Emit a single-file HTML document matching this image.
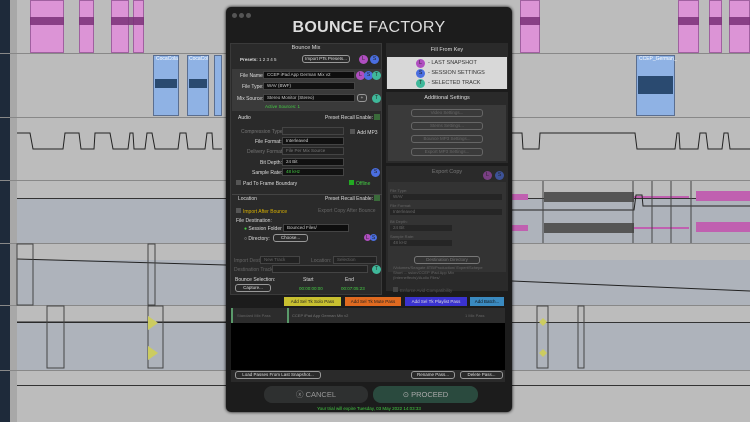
<!DOCTYPE html>
<html><head><meta charset="utf-8"><style>
*{margin:0;padding:0;box-sizing:border-box}
body{width:750px;height:422px;overflow:hidden;background:#bcbcbc;font-family:"Liberation Sans",sans-serif;position:relative}
.a{position:absolute}
.t{font-size:5px;color:#ddd;white-space:nowrap}
.dd{position:absolute;background:#111;border:1px solid #444;height:8px;font-size:4.5px;color:#ccc;padding-left:3px;line-height:6px}
.btn{position:absolute;border:1px solid #999;border-radius:3px;height:8px;font-size:4.5px;color:#ddd;text-align:center;line-height:6px}
.c{position:absolute;width:9px;height:9px;border-radius:50%;font-size:5px;color:#222;text-align:center;line-height:9px}
.L{background:#b04ec0}.S{background:#4a6ee0}.T{background:#3fb89a}
.pink{position:absolute;background:#dc94d6;border:1px solid #a060a0}
.blue{position:absolute;background:#8fb2e4;border:1px solid #5a6e90}
</style></head><body>
<div class="a" style="left:0;top:0;width:10px;height:422px;background:#1e2a3a"></div>
<div class="a" style="left:10px;top:0;width:7px;height:422px;background:#a8a8a8"></div>
<div class="a" style="left:17px;top:198px;width:733px;height:45px;background:#aeb3bb"></div>
<div class="a" style="left:17px;top:260px;width:733px;height:45px;background:#aeb3bb"></div>
<div class="a" style="left:17px;top:322px;width:733px;height:48px;background:#aeb3bb"></div>
<div class="a" style="left:0;top:53px;width:750px;height:1px;background:#888"></div>
<div class="a" style="left:0;top:117px;width:750px;height:1px;background:#888"></div>
<div class="a" style="left:0;top:180px;width:750px;height:1px;background:#888"></div>
<div class="a" style="left:0;top:243px;width:750px;height:1px;background:#888"></div>
<div class="a" style="left:0;top:305px;width:750px;height:1px;background:#888"></div>
<div class="a" style="left:0;top:370px;width:750px;height:1px;background:#888"></div>
<div class="a" style="left:17px;top:198px;width:733px;height:1px;background:#333"></div>
<div class="a" style="left:17px;top:322px;width:733px;height:1px;background:#333"></div>
<div class="a" style="left:17px;top:385px;width:733px;height:1px;background:#333"></div>
<div class="pink" style="left:30px;top:0;width:34px;height:53px"></div>
<div class="pink" style="left:79px;top:0;width:15px;height:53px"></div>
<div class="pink" style="left:111px;top:0;width:18px;height:53px"></div>
<div class="pink" style="left:133px;top:0;width:11px;height:53px"></div>
<div class="pink" style="left:520px;top:0;width:20px;height:53px"></div>
<div class="pink" style="left:678px;top:0;width:21px;height:53px"></div>
<div class="pink" style="left:709px;top:0;width:13px;height:53px"></div>
<div class="pink" style="left:729px;top:0;width:21px;height:53px"></div>
<div class="a" style="left:30px;top:17px;width:720px;height:8px;opacity:.85;background:linear-gradient(90deg,#7a3078 0 34px,transparent 34px 49px,#7a3078 49px 64px,transparent 64px 81px,#7a3078 81px 114px,transparent 114px 490px,#7a3078 490px 510px,transparent 510px 648px,#7a3078 648px 669px,transparent 669px 679px,#7a3078 679px 692px,transparent 692px 699px,#7a3078 699px)"></div>
<div class="blue" style="left:153px;top:55px;width:26px;height:61px"></div>
<div class="blue" style="left:187px;top:55px;width:22px;height:61px"></div>
<div class="blue" style="left:214px;top:55px;width:8px;height:61px"></div>
<div class="blue" style="left:636px;top:55px;width:39px;height:61px"></div>
<div class="a" style="left:155px;top:79px;width:22px;height:9px;background:#2a4a70"></div>
<div class="a" style="left:189px;top:79px;width:18px;height:9px;background:#2a4a70"></div>
<div class="a" style="left:638px;top:76px;width:35px;height:18px;background:#2a4a70"></div>
<div class="a" style="left:156px;top:56px;font-size:5px;color:#fff">CocaCola</div>
<div class="a" style="left:189px;top:56px;font-size:5px;color:#fff">CocaCol</div>
<div class="a" style="left:639px;top:56px;font-size:5px;color:#fff">CCEP_German_</div>
<svg class="a" style="left:0;top:0" width="750" height="422">
<polyline fill="none" stroke="#222" stroke-width="1" points="17,133 30,133 33,149 63,149 65,133 79,133 81,149 94,149 95,133 110,133 113,149 128,149 130,133 133,133 134,149 145,149 147,133 152,133 155,149 178,149 180,133 186,133 188,149 205,149 207,133 212,133 213,149 222,149"/>
<polyline fill="none" stroke="#222" stroke-width="1" points="512,133 522,133 523,149 539,149 540,133 635,133 637,149 675,149 677,133 679,133 680,149 698,149 700,133 706,133 708,149 722,149 724,133 728,133 730,149 750,149"/>
<line x1="17" y1="259" x2="226" y2="265" stroke="#222"/><line x1="512" y1="281" x2="750" y2="291" stroke="#222"/>
<line x1="17" y1="322" x2="226" y2="322" stroke="#222"/>
<rect x="17" y="244" width="16" height="61" fill="none" stroke="#444"/>
<rect x="148" y="244" width="7" height="61" fill="none" stroke="#444"/>
<rect x="47" y="306" width="17" height="62" fill="none" stroke="#444"/>
<rect x="148" y="306" width="15" height="62" fill="none" stroke="#444"/>
<rect x="537" y="306" width="11" height="62" fill="none" stroke="#444"/>
<rect x="578" y="306" width="6" height="62" fill="none" stroke="#444"/>
<polygon points="148,316 148,330 158,323" fill="#cccc60"/><polygon points="148,346 148,360 158,353" fill="#cccc60"/>
<polygon points="543,318 547,322 543,326 539,322" fill="#cccc60"/><polygon points="543,349 547,353 543,357 539,353" fill="#cccc60"/>
<rect x="544" y="192" width="90" height="10" fill="#555"/><rect x="544" y="223" width="90" height="10" fill="#555"/>
<rect x="512" y="194" width="16" height="6" fill="#c060b0"/><rect x="512" y="225" width="16" height="6" fill="#c060b0"/>
<rect x="634" y="196" width="55" height="2" fill="#c060b0"/><rect x="634" y="227" width="55" height="2" fill="#c060b0"/>
<rect x="696" y="191" width="54" height="10" fill="#c060b0"/><rect x="696" y="222" width="54" height="10" fill="#c060b0"/>
<polyline fill="none" stroke="#222" points="512,210 634,210 636,195 642,195 643,206 750,206"/>
<line x1="543" y1="181" x2="543" y2="243" stroke="#444"/><line x1="633" y1="181" x2="633" y2="243" stroke="#444"/><line x1="652" y1="181" x2="652" y2="243" stroke="#444"/><line x1="671" y1="181" x2="671" y2="243" stroke="#444"/><line x1="691" y1="181" x2="691" y2="243" stroke="#444"/>
</svg>
<div class="a" style="left:226px;top:7px;width:286px;height:405px;background:#1c1c1c;border-radius:5px;box-shadow:0 0 3px #000"></div>
<div class="a" style="left:232px;top:13px;width:5px;height:5px;border-radius:50%;background:#555;box-shadow:7px 0 #555,14px 0 #555"></div>
<div class="a" style="left:226px;top:19px;width:286px;text-align:center;font-size:16px;color:#ddd;letter-spacing:.3px"><b>BOUNCE</b> FACTORY</div>
<div class="a" style="left:230px;top:43px;width:152px;height:252px;background:#2a2a2a;border:1px solid #3a3a3a"></div>
<div class="a t" style="left:230px;top:45px;width:152px;text-align:center;font-size:5.5px">Bounce Mix</div>
<div class="a t" style="left:240px;top:57px;font-size:4.5px"><b>Presets:</b> 1 2 3 4 5</div>
<div class="btn" style="left:302px;top:55px;width:48px">Import PTs Presets...</div>
<div class="c L" style="left:359px;top:55px">L</div><div class="c S" style="left:370px;top:55px">S</div>
<div class="a" style="left:232px;top:69px;width:150px;height:42px;background:#3a3a3a"></div>
<div class="a t" style="left:240px;top:73px">File Name:</div><div class="dd" style="left:263px;top:71px;width:92px;background:#0d0d0d">CCEP iPad App German Mix v2</div>
<div class="c L" style="left:356px;top:71px">L</div><div class="c S" style="left:364px;top:71px">S</div><div class="c T" style="left:372px;top:71px">T</div>
<div class="a t" style="left:242px;top:84px">File Type:</div><div class="dd" style="left:263px;top:82px;width:92px">WAV (BWF)</div>
<div class="a t" style="left:237px;top:96px">Mix Source:</div><div class="dd" style="left:263px;top:94px;width:92px">Stereo Monitor (Stereo)</div>
<div class="btn" style="left:357px;top:94px;width:10px">+</div><div class="c T" style="left:372px;top:94px">T</div>
<div class="a" style="left:265px;top:104px;font-size:4.5px;color:#4c4">Active Sources: 1</div>
<div class="a t" style="left:238px;top:115px">Audio</div><div class="a t" style="left:325px;top:115px">Preset Recall Enable:</div>
<div class="a" style="left:374px;top:114px;width:6px;height:6px;background:#3a6a3a"></div>
<div class="a t" style="left:241px;top:129px;color:#777">Compression Type:</div><div class="dd" style="left:282px;top:127px;width:62px;background:#2a2a2a"></div>
<div class="a t" style="left:350px;top:129px"><span style="display:inline-block;width:5px;height:5px;background:#555;margin-right:2px"></span>Add MP3</div>
<div class="a t" style="left:255px;top:139px">File Format:</div><div class="dd" style="left:282px;top:137px;width:62px">Interleaved</div>
<div class="a t" style="left:247px;top:149px;color:#777">Delivery Format:</div><div class="dd" style="left:282px;top:147px;width:62px;background:#222;color:#777">File Per Mix Source</div>
<div class="a t" style="left:260px;top:160px">Bit Depth:</div><div class="dd" style="left:282px;top:158px;width:62px">24 Bit</div>
<div class="a t" style="left:252px;top:170px">Sample Rate:</div><div class="dd" style="left:282px;top:168px;width:62px;color:#4c4">48 kHz</div>
<div class="c S" style="left:371px;top:168px">S</div>
<div class="a t" style="left:236px;top:180px"><span style="display:inline-block;width:5px;height:5px;background:#555;margin-right:2px"></span>Pad To Frame Boundary</div>
<div class="a t" style="left:349px;top:180px;color:#4c4"><span style="display:inline-block;width:5px;height:5px;background:#2a2;margin-right:2px"></span>Offline</div>
<div class="a" style="left:232px;top:194px;width:150px;height:1px;background:#444"></div>
<div class="a t" style="left:238px;top:196px">Location</div><div class="a t" style="left:325px;top:196px">Preset Recall Enable:</div>
<div class="a" style="left:374px;top:195px;width:6px;height:6px;background:#3a6a3a"></div>
<div class="a t" style="left:236px;top:208px;color:#d8b000"><span style="display:inline-block;width:5px;height:5px;background:#555;margin-right:2px"></span>Import After Bounce</div>
<div class="a t" style="left:318px;top:208px;color:#666">Export Copy After Bounce</div>
<div class="a t" style="left:236px;top:218px">File Destination:</div>
<div class="a t" style="left:244px;top:226px"><span style="color:#4c4">●</span> Session Folder</div><div class="dd" style="left:283px;top:224px;width:66px;background:#0d0d0d">Bounced Files/</div>
<div class="a t" style="left:244px;top:236px">○ Directory:</div><div class="btn" style="left:273px;top:234px;width:35px">Choose...</div>
<div class="c L" style="left:364px;top:234px;width:7px;height:7px">L</div><div class="c S" style="left:370px;top:234px;width:7px;height:7px">S</div>
<div class="a t" style="left:234px;top:258px;color:#666">Import Dest: </div><div class="dd" style="left:260px;top:256px;width:40px;background:#222;color:#666">New Track</div>
<div class="a t" style="left:311px;top:258px;color:#666">Location:</div><div class="dd" style="left:333px;top:256px;width:44px;background:#222;color:#666">Selection</div>
<div class="a t" style="left:234px;top:267px;color:#666">Destination Track:</div><div class="dd" style="left:272px;top:265px;width:96px;background:#222"></div><div class="c T" style="left:372px;top:265px">T</div>
<div class="a t" style="left:235px;top:277px">Bounce Selection:</div>
<div class="btn" style="left:235px;top:284px;width:36px">Capture...</div>
<div class="a t" style="left:303px;top:277px">Start</div><div class="a t" style="left:345px;top:277px">End</div>
<div class="a" style="left:299px;top:286px;font-size:4.5px;color:#4c4">00:00:00:00</div><div class="a" style="left:341px;top:286px;font-size:4.5px;color:#4c4">00:07:05:23</div>
<div class="a" style="left:386px;top:43px;width:122px;height:46px;background:#2a2a2a"></div>
<div class="a t" style="left:386px;top:47px;width:122px;text-align:center;font-size:5.5px">Fill From Key</div>
<div class="a" style="left:387px;top:57px;width:120px;height:32px;background:#d8d8d8"></div>
<div class="c L" style="left:416px;top:59px">L</div><div class="a" style="left:428px;top:60px;font-size:5.5px;color:#333">- LAST SNAPSHOT</div>
<div class="c S" style="left:416px;top:69px">S</div><div class="a" style="left:428px;top:70px;font-size:5.5px;color:#333">- SESSION SETTINGS</div>
<div class="c T" style="left:416px;top:79px">T</div><div class="a" style="left:428px;top:80px;font-size:5.5px;color:#333">- SELECTED TRACK</div>
<div class="a" style="left:386px;top:92px;width:122px;height:71px;background:#2a2a2a"></div>
<div class="a t" style="left:386px;top:95px;width:122px;text-align:center;font-size:5.5px">Additional Settings</div>
<div class="a" style="left:388px;top:105px;width:118px;height:56px;background:#3a3a3a"></div>
<div class="btn" style="left:411px;top:109px;width:72px;border-color:#666;color:#666">Video Settings...</div>
<div class="btn" style="left:411px;top:122px;width:72px;border-color:#666;color:#666">Stems Settings...</div>
<div class="btn" style="left:411px;top:135px;width:72px;border-color:#666;color:#666">Bounce MP3 Settings...</div>
<div class="btn" style="left:411px;top:148px;width:72px;border-color:#666;color:#666">Export MP3 Settings...</div>
<div class="a" style="left:386px;top:166px;width:122px;height:125px;background:#2a2a2a"></div>
<div class="a t" style="left:386px;top:169px;width:122px;text-align:center;font-size:5.5px;color:#777">Export Copy</div>
<div class="c L" style="left:483px;top:171px;opacity:.6">L</div><div class="c S" style="left:495px;top:171px;opacity:.6">S</div>
<div class="a" style="left:388px;top:182px;width:118px;height:90px;background:#333"></div>
<div class="a t" style="left:390px;top:188px;color:#666;font-size:4px">File Type:</div><div class="dd" style="left:389px;top:193px;width:114px;background:#252525;border-color:#333;color:#666">WAV</div>
<div class="a t" style="left:390px;top:203px;color:#666;font-size:4px">File Format:</div><div class="dd" style="left:389px;top:208px;width:114px;background:#252525;border-color:#333;color:#666">Interleaved</div>
<div class="a t" style="left:390px;top:219px;color:#666;font-size:4px">Bit Depth:</div><div class="dd" style="left:389px;top:224px;width:64px;background:#252525;border-color:#333;color:#666">24 Bit</div>
<div class="a t" style="left:390px;top:234px;color:#666;font-size:4px">Sample Rate:</div><div class="dd" style="left:389px;top:239px;width:64px;background:#252525;border-color:#333;color:#666">48 kHz</div>
<div class="btn" style="left:414px;top:256px;width:66px;border-color:#777;color:#777">Destination Directory</div>
<div class="a" style="left:393px;top:265px;font-size:4px;color:#666;line-height:5px">/Volumes/Seagate 8TB/Production/ Expert/Schepe<br>Short ... ssion/CCEP iPad App Mix<br>(Interneffects)/Audio Files/</div>
<div class="a t" style="left:393px;top:287px;color:#555;font-size:4.5px"><span style="display:inline-block;width:5px;height:5px;background:#444;margin-right:2px"></span>Enforce Avid Compatibility</div>
<div class="a" style="left:284px;top:297px;width:57px;height:9px;background:#c8c030;font-size:4.5px;color:#222;text-align:center;line-height:9px">Add Sel Tk Solo Pass</div>
<div class="a" style="left:345px;top:297px;width:56px;height:9px;background:#e06a20;font-size:4.5px;color:#222;text-align:center;line-height:9px">Add Sel Tk Mute Pass</div>
<div class="a" style="left:405px;top:297px;width:62px;height:9px;background:#3a32d0;font-size:4.5px;color:#ddd;text-align:center;line-height:9px">Add Sel Tk Playlist Pass</div>
<div class="a" style="left:470px;top:297px;width:34px;height:9px;background:#3a8ac0;font-size:4.5px;color:#111;text-align:center;line-height:9px">Add Batch...</div>
<div class="a" style="left:231px;top:308px;width:274px;height:62px;background:#000"></div>
<div class="a" style="left:231px;top:308px;width:274px;height:15px;background:#2c2c2c"></div>
<div class="a" style="left:231px;top:308px;width:2px;height:15px;background:#5a9a6a"></div>
<div class="a" style="left:287px;top:308px;width:2px;height:15px;background:#5a9a6a"></div>
<div class="a" style="left:237px;top:313px;font-size:4px;color:#666">Standard Mix Pass</div>
<div class="a" style="left:292px;top:313px;font-size:4px;color:#777">CCEP iPad App German Mix v2</div>
<div class="a" style="left:465px;top:313px;font-size:4px;color:#666">1 Mix Pass</div>
<div class="a" style="left:231px;top:370px;width:274px;height:12px;background:#2a2a2a"></div>
<div class="btn" style="left:235px;top:371px;width:86px">Load Passes From Last Snapshot...</div>
<div class="btn" style="left:411px;top:371px;width:44px">Rename Pass...</div>
<div class="btn" style="left:460px;top:371px;width:43px">Delete Pass...</div>
<div class="a" style="left:264px;top:386px;width:104px;height:17px;background:#2e3030;border-radius:8px;font-size:7.5px;color:#999;text-align:center;line-height:17px">ⓧ CANCEL</div>
<div class="a" style="left:373px;top:386px;width:105px;height:17px;background:#2a4a3e;border-radius:8px;font-size:7.5px;color:#aaa;text-align:center;line-height:17px">⊙ PROCEED</div>
<div class="a" style="left:226px;top:406px;width:286px;text-align:center;font-size:4.5px;color:#4c4">Your trial will expire Tuesday, 03 May 2022 14:03:33</div>
</body></html>
